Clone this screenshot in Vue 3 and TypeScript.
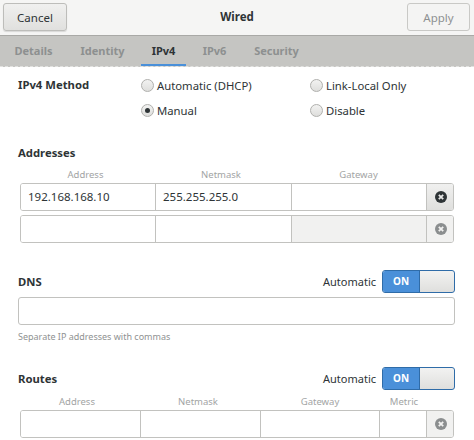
<script setup lang="ts">
const tabs = [
  { name: 'Details', w: 67 },
  { name: 'Identity', w: 71 },
  { name: 'IPv4', w: 51 },
  { name: 'IPv6', w: 51 },
  { name: 'Security', w: 73 },
]
const radios = [
  { label: 'Automatic (DHCP)', on: false },
  { label: 'Link-Local Only', on: false },
  { label: 'Manual', on: true },
  { label: 'Disable', on: false },
]
</script>

<template>
  <div class="win">
    <header class="head">
      <button class="btn">Cancel</button>
      <span class="title">Wired</span>
      <button class="btn apply">Apply</button>
    </header>
    <nav class="tabs">
      <span v-for="t in tabs" :key="t.name" class="tab" :class="{ active: t.name === 'IPv4' }" :style="{ width: t.w + 'px' }">{{ t.name }}</span>
    </nav>
    <main class="body">
      <section class="method">
        <span class="strong method-label">IPv4 Method</span>
        <div class="radios">
          <label v-for="r in radios" :key="r.label" class="radio">
            <i class="dot" :class="{ on: r.on }"></i>{{ r.label }}
          </label>
        </div>
      </section>

      <h3 class="strong addr-title">Addresses</h3>
      <div class="cols head-three"><span>Address</span><span>Netmask</span><span>Gateway</span><span></span></div>
      <div class="row three">
        <div class="cell">192.168.168.10</div>
        <div class="cell">255.255.255.0</div>
        <div class="cell"></div>
        <div class="del">
          <svg width="14" height="14" viewBox="0 0 14 14"><circle cx="7" cy="7" r="6" fill="#2e3436" /><path d="M4.8 4.8l4.4 4.4M9.2 4.8l-4.4 4.4" stroke="#e8e8e7" stroke-width="1.8" /></svg>
        </div>
      </div>
      <div class="row three second">
        <div class="cell"></div>
        <div class="cell"></div>
        <div class="cell off"></div>
        <div class="del off">
          <svg width="14" height="14" viewBox="0 0 14 14"><circle cx="7" cy="7" r="6" fill="#8b8e8f" /><path d="M4.8 4.8l4.4 4.4M9.2 4.8l-4.4 4.4" stroke="#f1f1f0" stroke-width="1.8" /></svg>
        </div>
      </div>

      <div class="bar dns-bar">
        <span class="strong">DNS</span>
        <div class="auto">
          <span>Automatic</span>
          <div class="switch"><b>ON</b><i></i></div>
        </div>
      </div>
      <div class="entry"></div>
      <p class="hint">Separate IP addresses with commas</p>

      <div class="bar routes-bar">
        <span class="strong">Routes</span>
        <div class="auto">
          <span>Automatic</span>
          <div class="switch"><b>ON</b><i></i></div>
        </div>
      </div>
      <div class="cols head-four"><span>Address</span><span>Netmask</span><span>Gateway</span><span>Metric</span><span></span></div>
      <div class="row four">
        <div class="cell"></div>
        <div class="cell"></div>
        <div class="cell"></div>
        <div class="cell"></div>
        <div class="del off">
          <svg width="14" height="14" viewBox="0 0 14 14"><circle cx="7" cy="7" r="6" fill="#8b8e8f" /><path d="M4.8 4.8l4.4 4.4M9.2 4.8l-4.4 4.4" stroke="#f1f1f0" stroke-width="1.8" /></svg>
        </div>
      </div>
    </main>
  </div>
</template>

<style scoped>
.win {
  width: 474px;
  height: 440px;
  overflow: hidden;
  background: #fff;
  color: #2e3436;
  font-family: "Noto Sans", sans-serif;
  font-size: 11.3px;
}
.head {
  height: 36px;
  box-sizing: border-box;
  padding: 3px 4px 0 3px;
  display: flex;
  justify-content: space-between;
  background: #f5f5f4;
  border-bottom: 1px solid #a9a9a6;
  position: relative;
}
.btn {
  width: 64px;
  height: 28px;
  padding: 0;
  border: 1px solid #bdbdba;
  border-radius: 3px;
  background: linear-gradient(#f0f0ef, #e0e0de);
  box-shadow: 0 1px 1px rgba(0, 0, 0, 0.12);
  color: #2e3436;
  font: 11.5px "Noto Sans", sans-serif;
}
.apply {
  width: 63px;
  background: #f4f4f3;
  box-shadow: none;
  border-color: #c9c9c6;
  color: #8e9192;
}
.title {
  position: absolute;
  left: 0;
  right: 0;
  top: 8px;
  text-align: center;
  font-weight: 700;
  font-size: 11.5px;
  line-height: 18px;
}
.tabs {
  height: 31px;
  box-sizing: border-box;
  display: flex;
  background: #c5c5c2;
  border-bottom: 1px dashed #e2e2e0;
  font-weight: 700;
  font-size: 11px;
  color: #8d9090;
}
.tab {
  display: flex;
  justify-content: center;
  align-items: center;
  height: 30px;
  box-sizing: border-box;
  padding-bottom: 1px;
}
.active {
  color: #2e3436;
  width: 45px !important;
  margin: 0 3px;
  border-bottom: 2px solid #4a90d9;
  padding-bottom: 0;
}
.body {
  padding: 0 19px 0 18px;
}
.strong {
  font-weight: 700;
  margin: 0;
  font-size: 11.3px;
  line-height: 18px;
}
.method {
  display: flex;
  padding-top: 9px;
}
.method-label {
  width: 123px;
}
.radios {
  display: grid;
  grid-template-columns: 169px 1fr;
  row-gap: 7px;
}
.radio {
  display: flex;
  align-items: center;
  gap: 3px;
  height: 18px;
  line-height: 17px;
}
.dot {
  width: 13px;
  height: 13px;
  box-sizing: border-box;
  border: 1px solid #b0b0ad;
  border-radius: 50%;
  background: linear-gradient(#f2f2f1, #dededc);
  display: flex;
  align-items: center;
  justify-content: center;
}
.dot.on::after {
  content: "";
  width: 5px;
  height: 5px;
  border-radius: 50%;
  background: #2e3436;
}
.addr-title {
  margin-top: 25px;
}
.cols {
  margin-left: 2px;
  margin-top: 4px;
  height: 17px;
  display: grid;
  font-size: 9.5px;
  line-height: 17px;
  color: #a2a4a4;
  text-align: center;
}
.head-three {
  grid-template-columns: 131px 140px 135px 28px;
}
.head-four {
  margin-top: 3px;
  grid-template-columns: 114px 128px 116px 52px 24px;
}
.three {
  grid-template-columns: 135px 136px 135px 28px;
}
.four {
  grid-template-columns: 120px 120px 119px 47px 28px;
}
.row {
  margin-left: 2px;
  width: 434px;
  height: 28px;
  box-sizing: border-box;
  display: grid;
  border: 1px solid #c2c2bf;
  border-radius: 3px;
  overflow: hidden;
}
.second {
  margin-top: 4px;
}
.cell {
  padding-left: 7px;
  font-size: 11.5px;
  line-height: 26px;
  border-right: 1px solid #c2c2bf;
  background: #fff;
}
.cell.off {
  background: #f1f1f0;
}
.del {
  display: flex;
  align-items: center;
  justify-content: center;
  background: linear-gradient(#f0f0ef, #dfdfdd);
}
.del.off {
  background: #f1f1f0;
}
.bar {
  display: flex;
  justify-content: space-between;
  align-items: center;
  height: 23px;
}
.dns-bar {
  margin-top: 27px;
}
.routes-bar {
  margin-top: 23px;
}
.auto {
  display: flex;
  align-items: center;
  gap: 6px;
  font-size: 11px;
}
.switch {
  width: 73px;
  height: 23px;
  box-sizing: border-box;
  border: 1px solid #2f6ca8;
  border-radius: 3px;
  display: flex;
  overflow: hidden;
  background: linear-gradient(#f2f2f1, #dfdfdd);
}
.switch b {
  width: 36px;
  background: #4a90d9;
  border-right: 1px solid #2f6ca8;
  color: #fff;
  font-size: 10px;
  line-height: 21px;
  text-align: center;
}
.entry {
  height: 28px;
  box-sizing: border-box;
  border: 1px solid #c2c2bf;
  border-radius: 3px;
  margin-top: 4px;
}
.hint {
  margin: 4px 0 0;
  color: #8f9292;
  font-size: 9px;
  line-height: 15px;
}
</style>
